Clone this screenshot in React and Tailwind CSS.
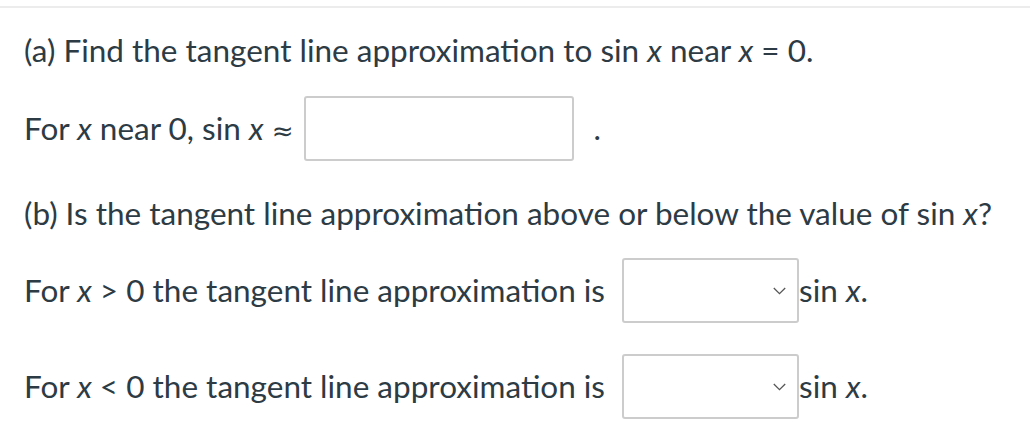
export default function App() {
  const font = { fontFamily: "Lato, 'Noto Sans', sans-serif" };
  const X = () => <i>x</i>;
  const Chevron = () => (
    <svg width="13" height="8" viewBox="0 0 13 8" className="absolute right-[11px] top-1/2 -translate-y-1/2">
      <path d="M0.8 1 L6.5 6.6 L12.2 1" fill="none" stroke="#555" strokeWidth="1.3" />
    </svg>
  );
  const Select = () => (
    <span className="relative block w-[177px] h-[65px] border-2 border-[#cccccc] rounded-[3px] bg-white">
      <Chevron />
    </span>
  );
  return (
    <div className="w-[1030px] h-[448px] bg-white text-[#2d3b45] text-[31.5px] overflow-hidden" style={font}>
      <div className="mt-[6px] h-[2px] bg-[#ececec]" />
      <div className="pl-[24px]">
        <div className="mt-[23px] leading-[38px]">
          (a) Find the tangent line approximation to sin <X /> near <X /> = 0.
        </div>
        <div className="mt-[27px] flex items-center h-[65px]">
          <span className="whitespace-pre">For <X /> near 0, sin <X /> <span className="font-['DejaVu_Sans'] text-[26px]">≈</span> </span>
          <span className="ml-[2px] block w-[270px] h-[65px] border-2 border-[#cccccc] rounded-[3px] bg-white" />
          <span className="ml-[20px]">.</span>
        </div>
        <div className="mt-[33px] leading-[38px]">
          (b) Is the tangent line approximation above or below the value of sin <X />?
        </div>
        <div className="mt-[26px] flex items-center h-[65px]">
          <span className="whitespace-pre">For <X /> &gt; 0 the tangent line approximation is </span>
          <span className="ml-[9px]"><Select /></span>
          <span className="whitespace-pre">sin <X />.</span>
        </div>
        <div className="mt-[31px] flex items-center h-[65px]">
          <span className="whitespace-pre">For <X /> &lt; 0 the tangent line approximation is </span>
          <span className="ml-[9px]"><Select /></span>
          <span className="whitespace-pre">sin <X />.</span>
        </div>
      </div>
    </div>
  );
}
